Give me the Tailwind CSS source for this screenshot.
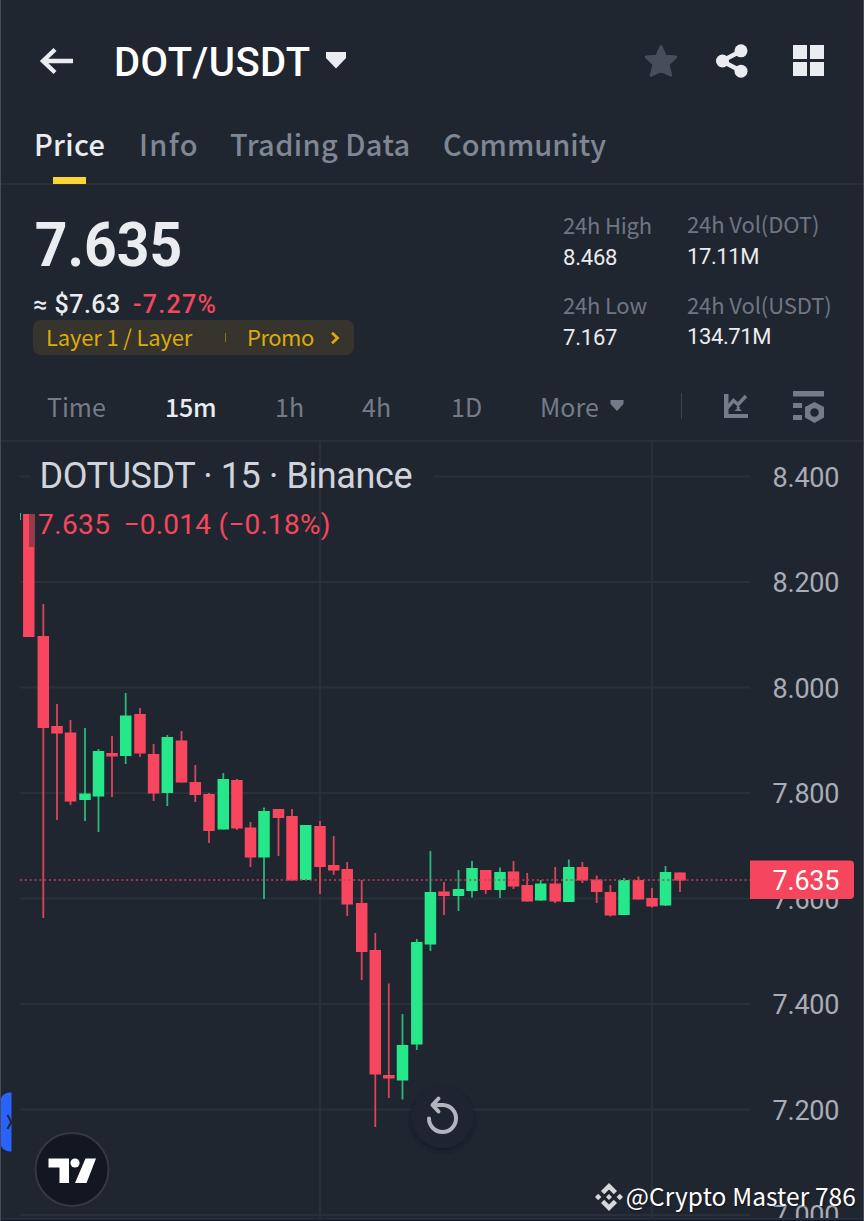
<!DOCTYPE html>
<html lang="en">
<head>
    <meta charset="UTF-8">
    <meta name="viewport" content="width=device-width, initial-scale=1.0">
    <title>DOT/USDT</title>
    <script src="https://cdn.jsdelivr.net/npm/@tailwindcss/browser@4"></script>
</head>
<body class="bg-[#202630] font-['Noto_Sans_CJK_SC',sans-serif] text-[#eaecef]">
<div class="relative w-[864px] h-[1221px] overflow-hidden border-x-1 border-[#474c57] whitespace-nowrap">

    <!-- Header -->
    <header class="flex items-center h-[121px] pl-[37px] pr-[39px]">
        <svg class="w-9 h-8" viewBox="0 0 36 32" fill="none" stroke="#eaecef" stroke-width="4.4"><path d="M35 16H5M17 4.500L5 16L17 27.500"/></svg>
        <h1 class="mt-[5px] ml-[40px] w-[196px] text-[40px] leading-[56px] font-medium font-[Roboto,sans-serif] tracking-[.5px] text-white">DOT/USDT</h1>
        <svg class="ml-[15px] w-[22px] h-[17px]" viewBox="0 0 22 17" fill="#eaecef"><path d="M1 0H21V6L11 16.500L1 6Z"/></svg>
        <div class="ml-auto flex items-center gap-[38px]">
            <svg class="w-[34px] h-[34px]" viewBox="0 0 34 34" fill="#474d59" stroke="#474d59" stroke-width="3" stroke-linejoin="round"><path d="M17 2.500L21.300 12.300L31.800 13L24 20.500L26.700 31.200L17 26.300L7.300 31.200L10 20.500L2.200 13L12.700 12.300Z"/></svg>
            <svg class="w-8 h-[34px]" viewBox="0 0 32 34" fill="#eaecef"><path d="M6 17L25 7M6 17L25 27" stroke="#eaecef" stroke-width="4.500"/><circle cx="6.500" cy="17" r="6.500"/><circle cx="25" cy="6.800" r="6.500"/><circle cx="25" cy="27.200" r="6.500"/></svg>
            <svg class="ml-[7px] w-[31px] h-[31px]" viewBox="0 0 31 31" fill="#eaecef"><path d="M0 0H14V14H0ZM17 0H31V14H17ZM0 17H14V31H0ZM17 17H31V31H17Z"/></svg>
        </div>
    </header>

    <!-- Tabs -->
    <nav class="flex h-16 pl-[33px] border-b-2 border-[#292f39] text-[29px] leading-[44px] font-medium text-[#7f8794]">
        <div class="relative w-[70px] text-[#eaecef] tracking-[.3px]">Price<span class="absolute left-[19px] bottom-[-1px] w-[33px] h-[7px] bg-[#fcd535]"></span></div>
        <div class="ml-[35px] w-[58px] tracking-[1.3px]">Info</div>
        <div class="ml-[33px] w-[181px] tracking-[.4px]">Trading Data</div>
        <div class="ml-[32px]">Community</div>
    </nav>

    <!-- Price and 24h figures -->
    <section class="flex h-[189px] pl-8">
        <div class="w-[529px] pt-[27px]">
            <div class="h-[66px] pl-[2px] origin-left scale-x-[.92] text-[62px] leading-[66px] font-bold font-[Roboto,sans-serif]">7.635</div>
            <div class="flex h-[42px] leading-[53px] text-[25px] font-medium font-[Roboto,sans-serif]">
                <span class="w-[100px] tracking-[.5px]">≈ $7.63</span>
                <span class="tracking-[1.3px] text-[#f6465d]">-7.27%</span>
            </div>
            <div class="flex items-center w-[321px] h-[35px] rounded-lg bg-[#36342d] pl-[13px] text-[22px] leading-[33px] text-[#dcab0b]">
                <span class="w-[179px] pb-[2px] tracking-[-.15px]">Layer 1 / Layer</span>
                <span class="w-px h-[9px] bg-[#8a701a]"></span>
                <span class="ml-[21px] w-[67px] pb-[2px] tracking-[-.5px]">Promo</span>
                <svg class="ml-4 w-[10px] h-3" viewBox="0 0 10 12" fill="none" stroke="#dcab0b" stroke-width="2.800"><path d="M2 0.800L7.500 6L2 11.200"/></svg>
            </div>
        </div>
        <div class="grid grid-cols-[125px_1fr] content-start pt-[23px] text-[22px]">
            <div class="h-20 pl-px">
                <div class="leading-8 tracking-[-.2px] text-[#6f7683]">24h High</div>
                <div class="pt-[2px] leading-8 tracking-[-.2px] font-[Roboto,sans-serif]">8.468</div>
            </div>
            <div class="h-20">
                <div class="leading-[31px] tracking-[-.1px] text-[#6f7683]">24h Vol(DOT)</div>
                <div class="pt-[2px] leading-8 tracking-[-.4px] font-[Roboto,sans-serif]">17.11M</div>
            </div>
            <div class="h-20 pl-px">
                <div class="leading-8 tracking-[-.2px] text-[#6f7683]">24h Low</div>
                <div class="pt-[2px] leading-8 tracking-[-.2px] font-[Roboto,sans-serif]">7.167</div>
            </div>
            <div class="h-20">
                <div class="leading-8 tracking-[-.1px] text-[#6f7683]">24h Vol(USDT)</div>
                <div class="pt-px leading-8 tracking-[-.4px] font-[Roboto,sans-serif]">134.71M</div>
            </div>
        </div>
    </section>

    <!-- Interval bar -->
    <div class="flex items-center h-[68px] pl-[46px] pr-[39px] border-b-2 border-[#292f39] text-[25px] text-[#757c89]">
        <span class="w-[118px]">Time</span>
        <span class="w-[110px] font-medium text-[#eaecef] tracking-[-.2px]">15m</span>
        <span class="w-[87px]">1h</span>
        <span class="w-[89px]">4h</span>
        <span class="w-[89px]">1D</span>
        <span class="w-[68px]">More</span>
        <svg class="ml-px mb-[2px] w-4 h-3" viewBox="0 0 16 12" fill="#757c89"><path d="M1.500 0H14.500V4L8 11L1.500 4Z"/></svg>
        <span class="ml-[56px] w-px h-[26px] mb-[2px] bg-[#3d434e]"></span>
        <svg class="ml-[42px] mb-[2px] w-6 h-6" viewBox="0 0 24 24" fill="#757c89"><path d="M0 0H4.500V20H24V24H0Z"/><path d="M3 14L9.500 6.500L14 10.500L22 2" fill="none" stroke="#757c89" stroke-width="3.500"/><path d="M14.200 11.500L16 13.500L15.200 14.500L18 17H10.500L13.200 14.500L12.400 13.500Z"/></svg>
        <svg class="ml-auto w-[31px] h-8" viewBox="0 0 31 32" fill="#757c89"><path d="M0 0H31V5.500H0ZM0 12H9V17H0ZM0 24H9V29H0Z"/><path fill-rule="evenodd" d="M21.500 11L31 16V26.500L21.500 32L12 26.500V16ZM21.500 17.200A4.300 4.300 0 1 0 21.500 25.800A4.300 4.300 0 1 0 21.500 17.200Z"/></svg>
    </div>

    <!-- Chart -->
    <svg class="block -ml-px w-[864px] h-[779px] font-[Roboto,sans-serif]" viewBox="0 442 864 779">
        <defs>
            <filter id="soft" x="-30%" y="-30%" width="160%" height="160%"><feGaussianBlur stdDeviation="2"/></filter>
        </defs>
        <path stroke="#2a303a" stroke-width="2" d="M20 476.500H30M434 476.500H750M20 582H750M20 687.500H750M20 793H750M20 898.500H750M20 1004H750M20 1109.500H750M20 1215H750M320 440V1218M652 440V1218M0 1219H864"/>
        <path d="M20.500 513V520" stroke="#2ebd85"/>
        <g id="candles"></g>
        <path d="M20 880H750" stroke="#c23e52" stroke-width="1.600" stroke-dasharray="2 2.830"/>
        <path d="M29 514H35V547H29Z" fill="#963b4a"/>
        <text x="39.500" y="488" font-size="36" textLength="373" fill="#d1d4dc">DOTUSDT · 15 · Binance</text>
        <g font-size="28" fill="#f6465d">
            <text x="38" y="533.500" textLength="72">7.635</text>
            <text x="123.500" y="533.500" textLength="207">−0.014 (−0.18%)</text>
        </g>
        <g font-size="27" fill="#a9adb8">
            <text x="772.500" y="486.500" textLength="67">8.400</text>
            <text x="772.500" y="592" textLength="67">8.200</text>
            <text x="772.500" y="697.500" textLength="67">8.000</text>
            <text x="772.500" y="803" textLength="67">7.800</text>
            <text x="772.500" y="909" textLength="67">7.600</text>
            <text x="772.500" y="1014" textLength="67">7.400</text>
            <text x="772.500" y="1119.500" textLength="67">7.200</text>
            <text x="772.500" y="1225" textLength="67">7.000</text>
        </g>
        <path d="M750 860.500H850Q854 860.500 854 864.500V895Q854 899 850 899H750Z" fill="#f6465d"/>
        <text x="772.500" y="889.500" font-size="27" textLength="67" fill="#fff">7.635</text>
        <path d="M0 1218.500H864V1221H0Z" fill="#202630"/>
        <path d="M0 1218.500H864" stroke="#2a303a"/>
        <path d="M0 1220.500H864" stroke="#171a26"/>

        <!-- Side drawer handle -->
        <path d="M11.500 1092.500H9Q0 1094 0 1104V1140Q0 1150 9 1151.500H11.500Z" fill="#2962ff"/>
        <path d="M7.500 1115L11.200 1122L7.500 1129" fill="none" stroke="#202630" stroke-width="2"/>

        <!-- TradingView badge -->
        <circle cx="72" cy="1169.500" r="36.500" fill="#131722" stroke="#343843" stroke-width="2"/>
        <path d="M48.500 1158.500H69V1183H59.500V1167.500H48.500ZM85.500 1158.500H96L86.500 1183H75Z" fill="#fff"/>
        <circle cx="75" cy="1163" r="4.600" fill="#fff"/>

        <!-- Reset button -->
        <circle cx="442.500" cy="1120" r="31" fill="#171b25" filter="url(#soft)"/>
        <circle cx="442.500" cy="1117" r="31" fill="#1f2530"/>
        <g fill="none" stroke="#b2b5be" stroke-width="4" stroke-linecap="round" stroke-linejoin="round">
            <path d="M434 1105H443A13.500 13.500 0 1 1 429 1118.500"/>
            <path d="M438.500 1098.500L432.500 1105L438.500 1111.500"/>
        </g>
    </svg>

    <!-- Author mark -->
    <div class="absolute right-[7px] bottom-0 flex items-center h-[50px] text-white">
        <svg class="w-7 h-7 mt-[2px] mr-[3px]" viewBox="0 0 28 28" fill="#d6d7d9"><path d="M14 0L22 8L18.800 11.200L14 6.400L9.200 11.200L6 8ZM14 28L22 20L18.800 16.800L14 21.600L9.200 16.800L6 20ZM14 11L17 14L14 17L11 14ZM3.200 10.800L6.400 14L3.200 17.200L0 14ZM24.800 10.800L28 14L24.800 17.200L21.600 14Z"/></svg>
        <span class="text-[24.500px] tracking-[.1px] [text-shadow:1px_1px_2px_rgba(0,0,0,.5)]">@Crypto Master 786</span>
    </div>
</div>

<script>
    // x centre, wick top, body top, body bottom, wick bottom, rising
    const candles = [
        [28.8, 514, 514, 637, 637, 0], [43.3, 604, 636, 728, 918, 0], [57, 704, 726, 733.5, 820, 0],
        [70.5, 720, 732.5, 801.5, 805, 0], [85, 728, 793.5, 800, 821, 1], [98.5, 749, 751, 796.5, 832, 1],
        [112, 736, 753, 756.5, 797, 0], [125.7, 693, 715.5, 756, 764, 1], [140, 708, 714, 753.5, 757, 0],
        [153.6, 744, 754, 793.5, 801, 0], [167.3, 735, 737, 793, 806, 1], [181.5, 731, 740.5, 782.5, 782.5, 0],
        [195.3, 765, 782, 795, 802, 0], [209, 793, 794, 831, 843, 0], [223.3, 773, 779, 829.5, 829.5, 1],
        [236.9, 779, 780, 828.5, 830, 0], [250.5, 822, 827.5, 857.5, 867, 0], [264, 807.5, 811, 857.5, 899, 1],
        [278.5, 809, 809, 818, 856, 0], [292, 809, 816, 880.5, 880.5, 0], [305.7, 825, 825, 880, 880, 1],
        [320, 821, 826, 867, 894, 0], [333.7, 836, 865, 870.5, 875, 0], [347.2, 862, 869, 904.5, 916, 0],
        [361.7, 880, 903, 952, 980, 0], [375.3, 933, 950, 1074.5, 1127, 0], [388.8, 983.5, 1075, 1078.5, 1098, 0],
        [402.5, 1014, 1045, 1080.5, 1099.5, 1], [416.8, 939, 942, 1044.5, 1050, 1], [430.4, 851, 892, 944.5, 951, 1],
        [444, 882, 891.5, 896, 915, 0], [458.5, 870, 889, 896, 911, 1], [472, 861, 868, 891, 897.5, 1],
        [485.7, 870, 870, 890, 894, 0], [500, 867.5, 872, 890, 898, 1], [513.5, 861, 871.5, 886.5, 889, 0],
        [527.2, 873, 885, 901.5, 901.5, 0], [540.7, 880, 883.5, 900.5, 901, 1], [555.2, 867, 883.5, 901.5, 903, 0],
        [568.8, 859.5, 867, 902, 902, 1], [582.4, 862, 867, 880.5, 883, 0], [596.7, 875.5, 879.5, 892, 903, 0],
        [610.4, 885, 892, 915.5, 916.5, 0], [624, 878, 880, 915, 915, 1], [638.4, 876.5, 880, 899.5, 899.5, 0],
        [652, 888, 898, 906.5, 907.5, 0], [665.5, 866, 872, 905.5, 906, 1], [680, 872.5, 872.5, 880.5, 892, 0]
    ];
    document.getElementById('candles').innerHTML = candles.map(([x, high, top, bottom, low, up]) =>
        `<path d="M${x} ${high}V${low}" stroke="${up ? '#2bb77a' : '#dc4459'}" stroke-width="1.8"/>` +
        `<path d="M${x} ${top}V${bottom}" stroke="${up ? '#26e88b' : '#f8465e'}" stroke-width="11.5"/>`
    ).join('');
</script>
</body>
</html>
